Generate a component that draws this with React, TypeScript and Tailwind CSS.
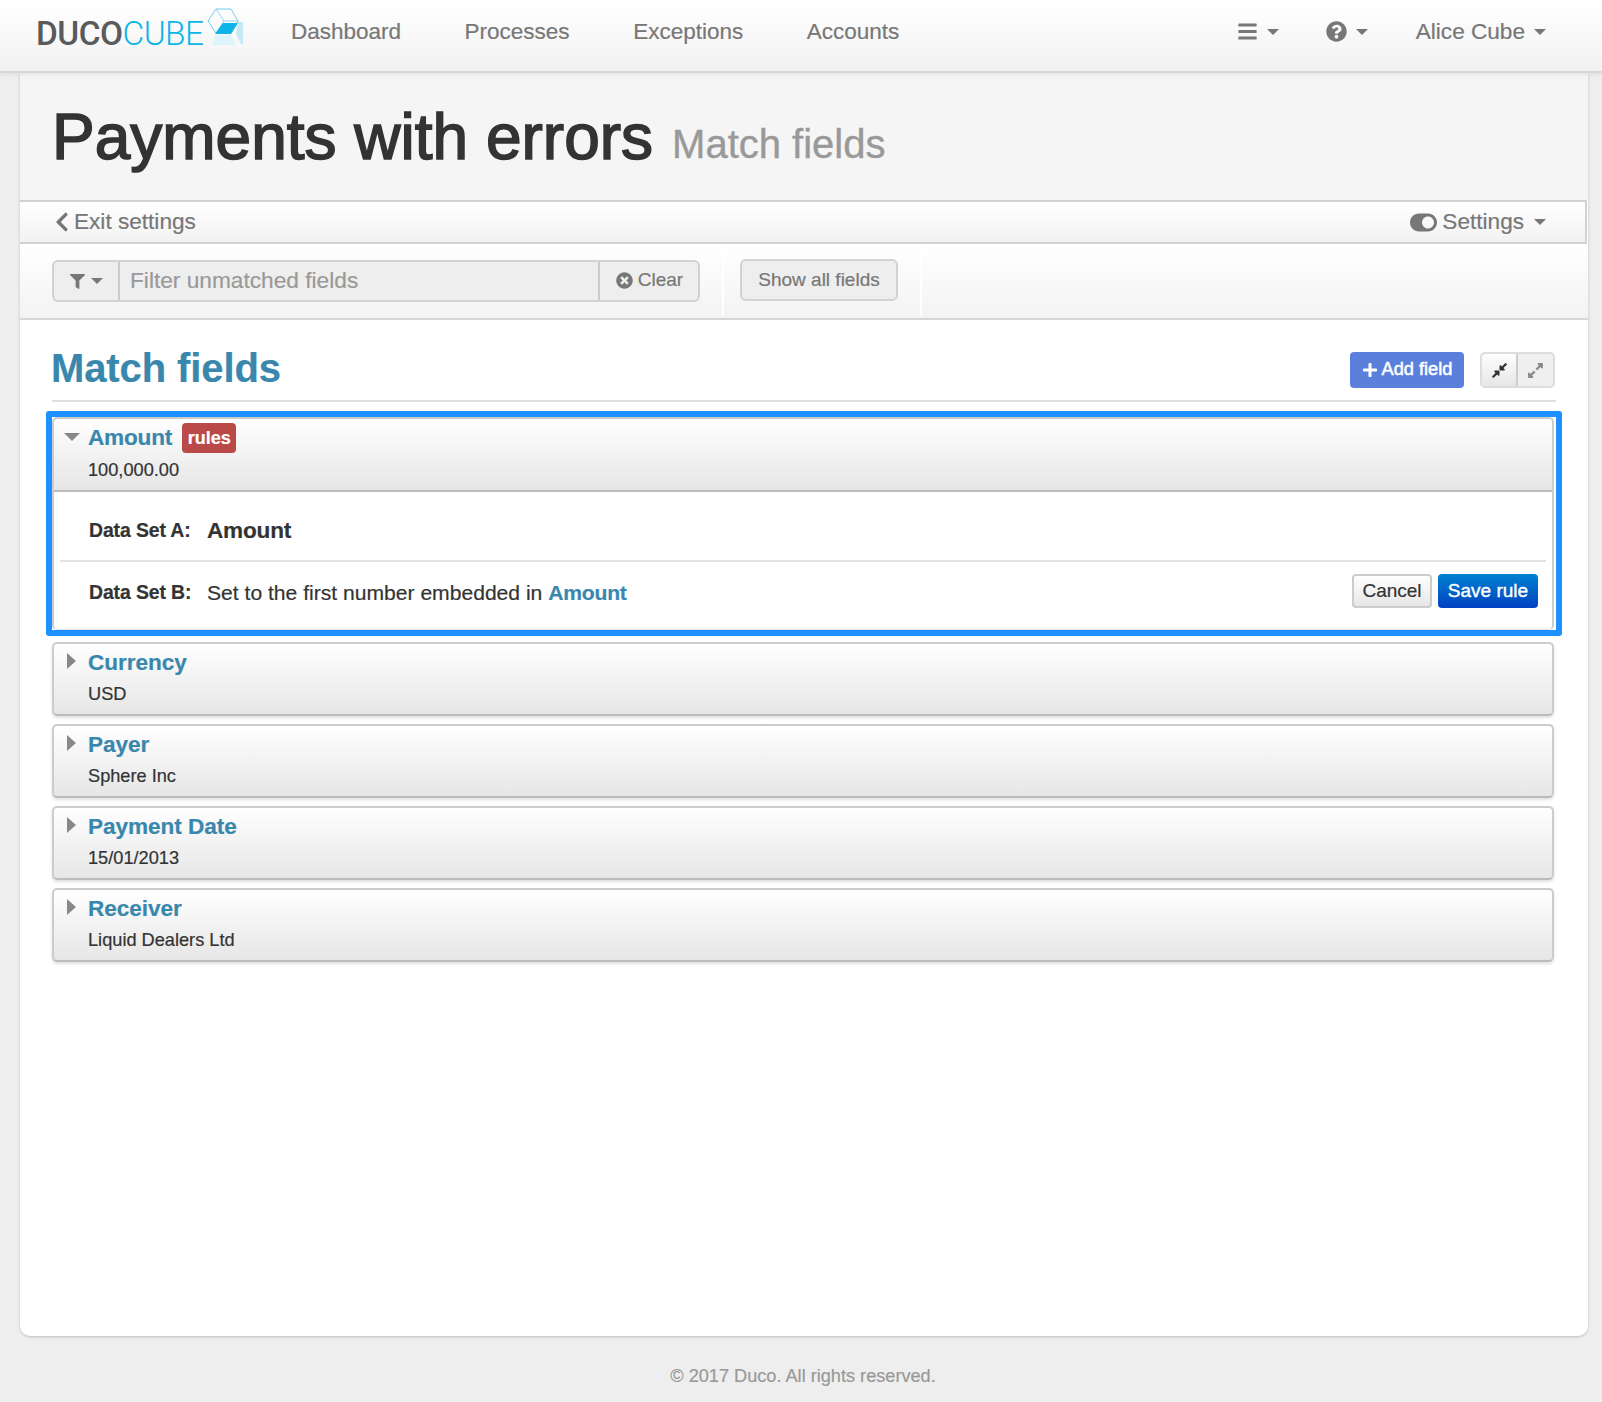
import React from "react";
import { FaBars, FaQuestionCircle, FaToggleOn, FaChevronLeft, FaFilter, FaTimesCircle, FaPlus, FaCompressAlt, FaExpandAlt } from "react-icons/fa";

function Caret({ className = "" }: { className?: string }) {
  return <span className={"inline-block w-0 h-0 border-x-[6px] border-x-transparent border-t-[6px] border-t-[#777] " + className} />;
}

function Logo() {
  return (
    <div className="flex items-start h-[72px] w-[242px] ml-[36px] shrink-0">
      <span className="mt-[16px] text-[33.4px] leading-[36px] font-['Roboto',sans-serif] tracking-[-0.5px] whitespace-nowrap [-webkit-text-stroke:0px]">
        <span className="font-medium text-[#5a5a5a]">DUCO</span>
        <span className="font-light text-[#0db4e8]">CUBE</span>
      </span>
      <svg width="36" height="40" viewBox="0 0 36 40" className="mt-[8px] ml-[3px] shrink-0">
        <path d="M9 1h15l7 12-7 12H9L1 13z" fill="none" stroke="#6fcdee" strokeWidth="1" />
        <path d="M9 1l8 12h14M17 13L9 25" fill="none" stroke="#6fcdee" strokeWidth="0.8" />
        <path d="M16 15h15l-7 11H8z" fill="#0db4e8" />
        <path d="M31 14h7v22h-4l-5-10z" fill="#c5e9f6" />
        <path d="M8 27h16l5 10H5z" fill="#dff3fa" />
      </svg>
    </div>
  );
}

function NavItem({ label, className }: { label: string; className: string }) {
  return <span className={"text-[22.5px] text-[#777] whitespace-nowrap " + className}>{label}</span>;
}

function Card({ title, value }: { title: string; value: string }) {
  return (
    <div className="h-[74px] rounded-[5px] border-2 border-[#ccc] border-b-[#bbb] bg-linear-to-b from-white to-[#e6e6e6] shadow-[0_2px_3px_rgba(0,0,0,0.12)] mx-[6px] mr-[8px] flex">
      <div className="w-[34px] shrink-0 pl-[13px] pt-[9px]">
        <span className="block w-0 h-0 border-y-[8px] border-y-transparent border-l-[9px] border-l-[#888]" />
      </div>
      <div className="flex flex-col">
        <span className="text-[22.6px] leading-[28px] mt-[5px] font-bold text-[#3a87ad] tracking-[-0.05px]">{title}</span>
        <span className="text-[18.2px] leading-[24px] mt-[5px] text-[#333]">{value}</span>
      </div>
    </div>
  );
}

export default function App() {
  return (
    <div className="h-[1402px] bg-[#eeeeee] flex flex-col font-['Liberation_Sans',Arial,sans-serif] text-[#333] overflow-hidden [-webkit-text-stroke:0.2px]">
      <nav className="relative z-10 h-[73px] shrink-0 flex items-start bg-linear-to-b from-white to-[#f2f2f2] border-b-2 border-[#d6d6d6] shadow-[0_2px_4px_rgba(0,0,0,0.06)]">
        <Logo />
        <div className="flex items-center h-[64px] flex-1">
          <NavItem label="Dashboard" className="ml-[13px]" />
          <NavItem label="Processes" className="ml-[63.5px]" />
          <NavItem label="Exceptions" className="ml-[63.5px]" />
          <NavItem label="Accounts" className="ml-[63.5px]" />
          <div className="ml-auto flex items-center text-[#777]">
            <FaBars className="text-[21px]" />
            <Caret className="ml-[9px]" />
            <FaQuestionCircle className="text-[21px] ml-[47px]" />
            <Caret className="ml-[9px]" />
            <span className="text-[22.6px] ml-[48px]">Alice Cube</span>
            <Caret className="ml-[9px] mr-[56px]" />
          </div>
        </div>
      </nav>

      <main className="w-[1568px] ml-[20px] h-[1263px] shrink-0 bg-white rounded-b-[10px] shadow-[0_1px_3px_rgba(0,0,0,0.2)] flex flex-col">
        <header className="h-[127px] shrink-0 bg-[#f5f5f5] flex items-start pl-[32px] pt-[28px]">
          <h1 className="text-[64px] leading-[72px] text-[#333] [-webkit-text-stroke:1.6px_#333] whitespace-nowrap">Payments with errors</h1>
          <span className="text-[40px] leading-[48px] text-[#999] ml-[19px] mt-[19px] whitespace-nowrap [-webkit-text-stroke:0.4px_#999]">Match fields</span>
        </header>

        <div className="h-[44px] shrink-0 flex items-center pl-[31px] pr-[39px] mr-[1px] border-y-2 border-[#d2d2d2] border-r-2 bg-linear-to-b from-white to-[#f2f2f2] text-[#777]">
          <FaChevronLeft className="text-[22px]" />
          <span className="text-[22.6px] ml-[1px]">Exit settings</span>
          <FaToggleOn className="text-[27px] ml-auto" />
          <span className="text-[22.6px] ml-[5px]">Settings</span>
          <Caret className="ml-[10px]" />
        </div>

        <div className="h-[76px] shrink-0 flex items-stretch pl-[32px] border-b-2 border-[#d6d6d6] bg-linear-to-b from-white to-[#f3f3f3]">
          <div className="flex items-center">
            <div className="flex h-[42px] w-[648px] rounded-[6px] border-2 border-[#d2d2d2] bg-[#eeeeee] text-[#777]">
              <div className="w-[66px] shrink-0 flex items-center justify-center border-r-2 border-[#ccc]">
                <FaFilter className="text-[15px]" />
                <Caret className="ml-[6px]" />
              </div>
              <div className="flex-1 flex items-center pl-[10px] pb-[2px] text-[22.7px] text-[#999]">Filter unmatched fields</div>
              <div className="w-[100px] shrink-0 flex items-center justify-center border-l-2 border-[#ccc] text-[19px] pb-[2px]">
                <FaTimesCircle className="text-[17px] mr-[5px] ml-[1px]" />
                <span>Clear</span>
              </div>
            </div>
          </div>
          <div className="ml-[22px] w-[200px] flex items-center pl-[16px] border-x-2 border-white mb-[2px]">
            <div className="h-[42px] w-[158px] flex items-center justify-center rounded-[6px] border-2 border-[#d2d2d2] bg-[#eeeeee] text-[19px] text-[#777]">Show all fields</div>
          </div>
        </div>

        <section className="flex-1 flex flex-col">
          <div className="h-[82px] shrink-0 mx-[32px] flex items-start border-b-2 border-[#e0e0e0]">
            <h2 className="text-[40px] leading-[48px] font-bold text-[#3a87ad] mt-[24px] -ml-[1px] tracking-[-0.1px]">Match fields</h2>
            <div className="ml-auto mr-[1px] flex mt-[32px]">
              <div className="h-[36px] w-[114px] flex items-center justify-center rounded-[4px] bg-[#5b80dc] text-white text-[18.2px] [-webkit-text-stroke:0.5px_white]">
                <FaPlus className="text-[16px] mr-[4px]" />
                <span>Add field</span>
              </div>
              <div className="ml-[16px] h-[36px] w-[75px] flex rounded-[5px] border-2 border-[#ddd] bg-[#efefef]">
                <div className="w-[36px] shrink-0 flex items-center justify-center border-r-2 border-[#ccc] bg-linear-to-b from-white to-[#e6e6e6] rounded-l-[4px] text-[#333]"><FaCompressAlt className="text-[17px]" /></div>
                <div className="flex-1 flex items-center justify-center text-[#888]"><FaExpandAlt className="text-[17px]" /></div>
              </div>
            </div>
          </div>

          <div className="mt-[9px] ml-[26px] w-[1516px] h-[225px] rounded-[3px] border-[6px] border-[#1e90ff] shrink-0">
            <div className="h-[213px] w-[1502px] rounded-[5px] border-2 border-[#ccc] border-b border-b-[#e0e0e0] flex flex-col">
              <div className="h-[73px] shrink-0 flex bg-linear-to-b from-white to-[#e6e6e6] border-b-2 border-[#bbb] rounded-t-[4px]">
                <div className="w-[34px] shrink-0 pl-[10px] pt-[14px]">
                  <span className="block w-0 h-0 border-x-[8px] border-x-transparent border-t-[8px] border-t-[#888]" />
                </div>
                <div className="flex flex-col">
                  <div className="flex items-center mt-[4px] h-[30px]">
                    <span className="text-[22.6px] font-bold text-[#3a87ad] tracking-[-0.2px]">Amount</span>
                    <span className="ml-[10px] h-[30px] w-[54px] flex items-center justify-center rounded-[4px] bg-[#b94a48] text-white text-[18px] font-bold">rules</span>
                  </div>
                  <span className="text-[18.2px] leading-[24px] mt-[5px] text-[#333]">100,000.00</span>
                </div>
              </div>
              <div className="h-[70px] shrink-0 mx-[6px] flex items-center border-b-2 border-[#e2e2e2] pt-[10px]">
                <span className="ml-[29px] w-[118px] text-[19.4px] font-bold tracking-[-0.1px]">Data Set A:</span>
                <span className="text-[22.6px] font-bold tracking-[-0.2px]">Amount</span>
              </div>
              <div className="flex-1 mx-[6px] flex items-start pt-[12px]">
                <span className="ml-[29px] w-[118px] text-[19.4px] font-bold mt-[4px] tracking-[-0.1px]">Data Set B:</span>
                <span className="text-[21.1px] mt-[3px]">Set to the first number embedded in <b className="text-[#3a87ad] tracking-[-0.2px]">Amount</b></span>
                <div className="ml-auto mr-[8px] flex gap-[6px]">
                  <div className="h-[34px] w-[80px] flex items-center justify-center rounded-[4px] border-2 border-[#ccc] bg-linear-to-b from-white to-[#e6e6e6] text-[19px] text-[#333]">Cancel</div>
                  <div className="h-[34px] w-[100px] flex items-center justify-center rounded-[4px] bg-linear-to-b from-[#0080d0] to-[#0040c0] text-[19px] text-white [-webkit-text-stroke:0.4px_white]">Save rule</div>
                </div>
              </div>
            </div>
          </div>

          <div className="mt-[6px] ml-[26px] flex flex-col gap-[8px]">
            <div className="w-[1516px]"><Card title="Currency" value="USD" /></div>
            <div className="w-[1516px]"><Card title="Payer" value="Sphere Inc" /></div>
            <div className="w-[1516px]"><Card title="Payment Date" value="15/01/2013" /></div>
            <div className="w-[1516px]"><Card title="Receiver" value="Liquid Dealers Ltd" /></div>
          </div>
        </section>
      </main>

      <footer className="flex-1 flex items-center justify-center text-[18.15px] text-[#999] pt-[16px] pl-[4px]">© 2017 Duco. All rights reserved.</footer>
    </div>
  );
}
